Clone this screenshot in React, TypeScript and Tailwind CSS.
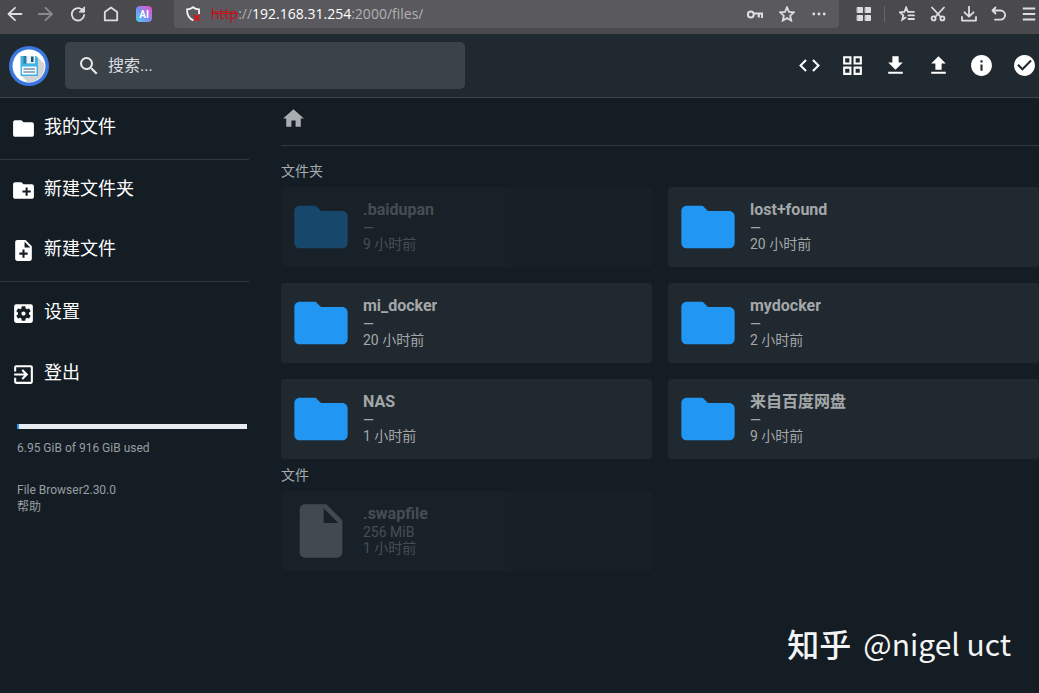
import type { ReactNode } from "react";
import {
  MdCheckCircle,
  MdCode,
  MdCreateNewFolder,
  MdExitToApp,
  MdFolder,
  MdGridView,
  MdHome,
  MdInfo,
  MdInsertDriveFile,
  MdNoteAdd,
  MdSearch,
  MdSettingsApplications,
} from "react-icons/md";

type Entry = {
  name: string;
  size: string;
  modified: string;
  hidden?: boolean;
  isDir?: boolean;
};

const folders: Entry[] = [
  { name: ".baidupan", size: "—", modified: "9 小时前", hidden: true, isDir: true },
  { name: "lost+found", size: "—", modified: "20 小时前", isDir: true },
  { name: "mi_docker", size: "—", modified: "20 小时前", isDir: true },
  { name: "mydocker", size: "—", modified: "2 小时前", isDir: true },
  { name: "NAS", size: "—", modified: "1 小时前", isDir: true },
  { name: "来自百度网盘", size: "—", modified: "9 小时前", isDir: true },
];

const files: Entry[] = [
  { name: ".swapfile", size: "256 MiB", modified: "1 小时前", hidden: true },
];

const usage = { used: 6.95, total: 916 };

type ChromeButtonProps = { label: string; className?: string; children: ReactNode };

const ChromeButton = ({ label, className = "w-8", children }: ChromeButtonProps) => (
  <button aria-label={label} className={`flex h-7 shrink-0 items-center justify-center ${className}`}>
    <svg
      viewBox="0 0 16 16"
      className="size-4"
      fill="none"
      stroke="currentColor"
      strokeWidth="1.8"
      strokeLinecap="round"
      strokeLinejoin="round"
    >
      {children}
    </svg>
  </button>
);

const BrowserBar = () => (
  <div className="flex h-[34px] items-start overflow-hidden bg-[#4a494e] text-[#dededf]">
    <div className="-ml-px flex shrink-0">
      <ChromeButton label="后退">
        <path d="M14.500 8H1.500M8 1.800 1.500 8 8 14.200" />
      </ChromeButton>
      <div className="text-[#8b8a8e]">
        <ChromeButton label="前进" className="w-[30px]">
          <path d="M.9 8h13M7.500 1.800 14 8l-6.500 6.200" />
        </ChromeButton>
      </div>
      <ChromeButton label="刷新" className="w-[34px]">
        <path d="M13.600 5.500A6.200 6.200 0 1 0 14.200 9" />
        <path d="M14.500 1.200v4.900H9.600z" fill="currentColor" strokeWidth="1" />
      </ChromeButton>
      <ChromeButton label="主页">
        <path d="M1.800 14.300V5.900L8 1.600l6.200 4.300v8.400z" />
      </ChromeButton>
      <button aria-label="AI" className="flex h-7 w-[34px] items-center justify-center">
        <span className="flex size-4 items-center justify-center rounded bg-linear-to-bl from-[#f03bc0] via-[#7c86f0] to-[#2ad8ee] font-[Roboto,sans-serif] text-[10px] font-bold text-white">
          AI
        </span>
      </button>
    </div>

    <div className="ml-[13px] flex h-7 min-w-0 flex-1 items-center rounded-b bg-[#5a595e] pr-1 pl-[11px]">
      <svg viewBox="0 0 16 16" className="size-4 shrink-0" fill="none" strokeWidth="1.8">
        <path
          d="M8.600 14.400C4.500 13 2 9.500 2 3.300 4.500 3.300 6.500 2.400 8 1.200c1.500 1.200 3.500 2.100 6 2.100v5"
          stroke="#f4f4f5"
        />
        <path d="m9 9 5.500 5.500M14.500 9 9 14.500" stroke="#d7161d" strokeWidth="2" />
      </svg>
      <div className="ml-2.5 truncate font-['Open_Sans',sans-serif] text-sm text-[#b1b1b4]">
        <span className="text-[#c4101a] line-through">http</span>
        ://<span className="text-white">192.168.31.254</span>:2000/files/
      </div>
      <div className="ml-auto flex">
        <ChromeButton label="密码">
          <circle cx="3.800" cy="8.500" r="2.900" strokeWidth="2" />
          <path d="M6.500 7.500h8.700v4.500M11.800 8v3.500" strokeWidth="2.200" strokeLinecap="butt" strokeLinejoin="miter" />
        </ChromeButton>
        <ChromeButton label="收藏">
          <path d="m8 1.400 2 4.500 4.800.5-3.600 3.300 1 4.800L8 12.100l-4.200 2.400 1-4.800L1.200 6.400 6 5.900z" strokeLinejoin="miter" />
        </ChromeButton>
        <ChromeButton label="更多">
          <path d="M2.800 8h.01M8 8h.01M13.200 8h.01" strokeWidth="2.800" />
        </ChromeButton>
      </div>
    </div>

    <ChromeButton label="应用" className="ml-[9px] w-8">
      <path
        d="M1.500 1.500h5v5h-5zM9.500 1.500h5v5h-5zM1.500 9.500h5v5h-5zM9.500 9.500h5v5h-5z"
        fill="currentColor"
        strokeWidth="1"
      />
    </ChromeButton>
    <div className="mt-1.5 mr-[7px] ml-1 h-4 w-px shrink-0 bg-[#67666b]" />
    <div className="-mr-[5px] flex shrink-0">
      <ChromeButton label="收藏夹" className="w-[30px]">
        <path
          d="M6.500 11.600 3.300 13.700l1-4.300L.8 6.300l4.600-.4L7.200 1.600l1.700 4.200H15M9.500 9.400H15M9.500 13H15"
          strokeLinejoin="miter"
        />
      </ChromeButton>
      <ChromeButton label="截图" className="w-8">
        <path d="M2 1.500 10.800 11M14 1.500 5.200 11" />
        <circle cx="3.600" cy="12.400" r="2" />
        <circle cx="12.400" cy="12.400" r="2" />
      </ChromeButton>
      <ChromeButton label="下载" className="w-[30px]">
        <path d="M8 .8v9.700M3.500 6.300 8 10.700l4.500-4.400M1 11v3.600h14V11" />
      </ChromeButton>
      <ChromeButton label="撤销" className="w-[30px]">
        <path d="M4.500 1.500 1.500 4.500l3 3M1.800 4.500h7.700a4.600 4.600 0 0 1 0 9.200H4" />
      </ChromeButton>
      <ChromeButton label="菜单" className="w-[30px]">
        <path d="M1.800 2.500h12.400M1.800 8h12.400M1.800 13.500h12.400" strokeLinecap="butt" />
      </ChromeButton>
    </div>
  </div>
);

const Logo = () => (
  <svg viewBox="0 0 40 40" className="size-10 shrink-0" role="img" aria-label="File Browser">
    <circle cx="20" cy="20" r="20" fill="#3a78e0" />
    <circle cx="20" cy="20" r="16.500" fill="#fff" />
    <path d="M28.500 11 35.500 18A16.500 16.500 0 0 1 19 36.400L12 29.500z" fill="#d3d3d3" />
    <path d="M11.500 10h15.500l2 2v18H11.500z" fill="#40b4e8" />
    <path d="M14.500 10h11.500v7.500H14.500z" fill="#2b7c9e" />
    <path d="M17.500 10H26v7.500h-8.500z" fill="#e4f4fb" />
    <path d="M22 10.500h2.500v5.500H22z" fill="#24506a" />
    <path d="M13 20.500h14.500v8H13z" fill="#f6fbfe" />
    <path d="M14.500 23h11.500M14.500 26h11.500" stroke="#3c5f86" strokeWidth="1" />
  </svg>
);

const DownloadIcon = () => (
  <svg viewBox="0 0 24 24" className="size-[25px]" fill="currentColor">
    <path d="M19 9h-4V3H9v6H5l7 7 7-7zM5 18v2h14v-2H5z" />
  </svg>
);

const UploadIcon = () => (
  <svg viewBox="0 0 24 24" className="size-[25px]" fill="currentColor">
    <path d="M9 16h6v-6h4l-7-7-7 7h4v6zm-4 2h14v2H5z" />
  </svg>
);

const actions = [
  { label: "切换 Shell", icon: <MdCode className="size-[25px]" /> },
  { label: "切换显示方式", icon: <MdGridView className="size-[25px]" /> },
  { label: "下载", icon: <DownloadIcon /> },
  { label: "上传", icon: <UploadIcon /> },
  { label: "信息", icon: <MdInfo className="size-[25px]" /> },
  { label: "多选", icon: <MdCheckCircle className="size-[25px]" /> },
];

const Header = () => (
  <header className="flex h-16 items-center overflow-hidden border-b border-[#3d444a] bg-[#20292f] pl-[9px]">
    <Logo />
    <label className="ml-4 flex h-[47px] w-[400px] items-center rounded-[5px] bg-[#3b4348] pl-3">
      <MdSearch className="size-6 text-[#e8e9ea]" />
      <input
        type="text"
        aria-label="搜索"
        placeholder="搜索..."
        className="ml-[7px] min-w-0 flex-1 bg-transparent text-base text-white outline-none placeholder:text-[#dcdee0]"
      />
    </label>
    <div className="-mr-[7px] ml-auto flex shrink-0 text-white">
      {actions.map((action) => (
        <button key={action.label} aria-label={action.label} className="flex h-10 w-[43px] items-center justify-center">
          {action.icon}
        </button>
      ))}
    </div>
  </header>
);

const NavItem = ({ icon, text }: { icon: ReactNode; text: string }) => (
  <button className="flex h-[60px] w-full items-center pl-[11px] text-lg text-white">
    {icon}
    <span className="mb-0.5 ml-2">{text}</span>
  </button>
);

const Sidebar = () => (
  <nav className="w-[249px] shrink-0">
    <div className="border-b border-[#323a40] pb-px">
      <NavItem icon={<MdFolder className="size-[25px]" />} text="我的文件" />
    </div>
    <div className="border-b border-[#323a40] pb-px">
      <NavItem icon={<MdCreateNewFolder className="size-[25px]" />} text="新建文件夹" />
      <NavItem icon={<MdNoteAdd className="size-[25px]" />} text="新建文件" />
    </div>
    <div className="flex flex-col gap-px pt-px">
      <NavItem icon={<MdSettingsApplications className="size-[25px]" />} text="设置" />
      <NavItem icon={<MdExitToApp className="size-[25px]" />} text="登出" />
    </div>

    <div className="mt-5 mr-0.5 ml-[17px] text-xs text-[#989da0]">
      <div
        role="progressbar"
        aria-label="已用空间"
        aria-valuenow={usage.used}
        aria-valuemax={usage.total}
        className="h-[5px] bg-[#e8ebf0]"
      >
        <div className="h-full bg-[#2196f3]" style={{ width: `${(usage.used / usage.total) * 100}%` }} />
      </div>
      <p className="mt-[11px]">6.95 GiB of 916 GiB used</p>
      <p className="mt-[26px]">File Browser2.30.0</p>
      <a href="#help" className="mt-px block">帮助</a>
    </div>
  </nav>
);

const Card = ({ entry }: { entry: Entry }) => (
  <button
    className={`flex h-20 min-w-0 items-center rounded-sm bg-[#20292f] pl-2 text-left text-sm text-[#a3a7a9] ${
      entry.hidden ? "opacity-35" : ""
    }`}
  >
    {entry.isDir ? (
      <MdFolder className="size-16 shrink-0 text-[#2196f3]" />
    ) : (
      <MdInsertDriveFile className="size-16 shrink-0 text-[#9a9ea1]" />
    )}
    <span className="ml-2.5 flex min-w-0 flex-col pb-0.5">
      <span className="truncate text-base leading-5 font-bold">{entry.name}</span>
      <span className="leading-4">{entry.size}</span>
      <span className="leading-4">{entry.modified}</span>
    </span>
  </button>
);

const Section = ({ title, entries }: { title: string; entries: Entry[] }) => (
  <section>
    <h2 className="flex h-8 items-center text-sm text-[#a6abae]">{title}</h2>
    <div className="grid grid-cols-2 gap-4">
      {entries.map((entry) => (
        <Card key={entry.name} entry={entry} />
      ))}
    </div>
  </section>
);

const App = () => {
  return (
    <div className="relative min-h-screen overflow-hidden bg-[#141d24] font-[Roboto,'Noto_Sans_CJK_SC',sans-serif]">
      <BrowserBar />
      <Header />
      <div className="flex">
        <Sidebar />
        <main className="ml-8 min-w-0 flex-1">
          <div className="mb-[9px] flex h-12 items-start border-b border-[#323a40] pt-2">
            <a href="#home" aria-label="主页" className="text-[#a9adb1]">
              <MdHome className="size-[25px]" />
            </a>
          </div>
          <Section title="文件夹" entries={folders} />
          <Section title="文件" entries={files} />
        </main>
      </div>

      {/* watermark */}
      <div className="absolute right-7 bottom-[26px] flex items-center gap-3 font-['Noto_Sans_CJK_SC',sans-serif] text-[#f3f4f5]">
        <span className="text-[32px] leading-[48px] font-medium">知乎</span>
        <span className="text-[30px] leading-[48px]">@nigel uct</span>
      </div>
    </div>
  );
};

export default App;
